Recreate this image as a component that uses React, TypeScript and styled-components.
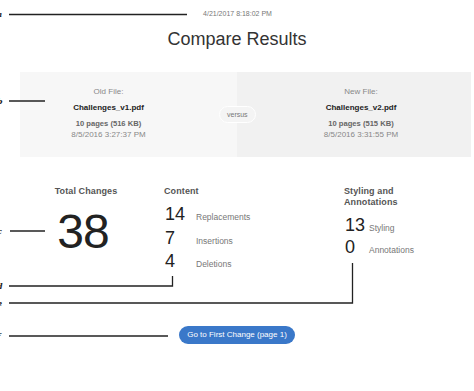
import React from "react";
import styled, { createGlobalStyle } from "styled-components";

const Global = createGlobalStyle`
  html, body { margin: 0; padding: 0; background: #fff; }
  body { font-family: "Liberation Sans", Arial, sans-serif; color: #333; }
`;

const Page = styled.div`
  position: relative;
  width: 474px;
  height: 391px;
  overflow: hidden;
  padding-top: 10px;
  box-sizing: border-box;
`;

const DateLine = styled.div`
  text-align: center;
  font-size: 7px;
  line-height: 8px;
  color: #777;
  padding-left: 1px;
`;

const Title = styled.h1`
  margin: 10px 0 0;
  text-align: center;
  font-size: 18px;
  line-height: 22px;
  font-weight: normal;
  color: #333;
`;

const Files = styled.div`
  position: relative;
  display: flex;
  margin: 22px 3px 0 20px;
  height: 85px;
`;

const FilePanel = styled.div<{ $side: "left" | "right" }>`
  flex: 0 0 ${(p) => (p.$side === "left" ? "217px" : "234px")};
  background: ${(p) => (p.$side === "left" ? "#f7f7f7" : "#f1f1f1")};
  display: flex;
  flex-direction: column;
  align-items: center;
  padding-top: 15px;
  box-sizing: border-box;
  ${(p) => (p.$side === "left" ? "padding-right: 40px;" : "padding-left: 14px;")}
`;

const FileLabel = styled.div`
  font-size: 8px;
  line-height: 10px;
  color: #888;
`;

const FileName = styled.div`
  margin-top: 6px;
  font-size: 8px;
  line-height: 10px;
  font-weight: bold;
  color: #222;
`;

const FilePages = styled.div`
  margin-top: 6px;
  font-size: 7.6px;
  line-height: 10px;
  font-weight: bold;
  color: #666;
`;

const FileDate = styled.div`
  margin-top: 1px;
  font-size: 8px;
  line-height: 10px;
  color: #888;
`;

const Versus = styled.div`
  position: absolute;
  left: 199px;
  top: 34px;
  height: 15px;
  padding: 0 7px;
  border: 1.5px solid #fff;
  border-radius: 9px;
  background: #f4f4f4;
  font-size: 7px;
  line-height: 15px;
  color: #777;
`;

const Stats = styled.div`
  display: grid;
  grid-template-columns: 80px 142px 100px;
  column-gap: 38px;
  margin-top: 29px;
  padding-left: 46px;
  align-items: start;
`;

const StatHeading = styled.div<{ $center?: boolean }>`
  font-size: 9px;
  line-height: 11px;
  font-weight: bold;
  color: #555;
  letter-spacing: 0.1px;
  text-align: ${(p) => (p.$center ? "center" : "left")};
  width: ${(p) => (p.$center ? "auto" : "60px")};
`;

const TotalColumn = styled.div`
  display: flex;
  flex-direction: column;
  align-items: center;
`;

const BigNumber = styled.div`
  margin-top: 11px;
  font-size: 48px;
  line-height: 48px;
  color: #222;
  margin-left: -6px;
  letter-spacing: -1px;
`;

const List = styled.div`
  margin-top: 7px;
`;

const Row = styled.div<{ $gap: number; $h: number }>`
  display: grid;
  grid-template-columns: ${(p) => p.$gap}px auto;
  align-items: baseline;
  height: ${(p) => p.$h}px;
  line-height: ${(p) => p.$h}px;
  overflow: visible;
`;

const Count = styled.span`
  font-size: 18px;
  line-height: 20px;
  color: #222;
  padding-left: 1px;
`;

const CountLabel = styled.span`
  font-size: 8.5px;
  line-height: 10px;
  color: #777;
`;

const ButtonRow = styled.div`
  display: flex;
  justify-content: center;
  margin-top: 51px;
`;

const Button = styled.button`
  height: 18px;
  padding: 0 8px;
  border: none;
  border-radius: 9px;
  background: #3a78c9;
  color: #fff;
  font-family: "Liberation Sans", Arial, sans-serif;
  font-size: 8px;
  line-height: 18px;
  cursor: pointer;
`;

const CalloutLayer = styled.svg`
  position: absolute;
  left: 0;
  top: 0;
  pointer-events: none;
`;

const CalloutLetter = styled.span<{ $top: number }>`
  position: absolute;
  left: -3px;
  top: ${(p) => p.$top}px;
  font-family: "DejaVu Serif", serif;
  font-style: italic;
  font-weight: bold;
  font-size: 8px;
  line-height: 8px;
  color: #222;
`;

const callouts = [
  { letter: "a", d: "M9 14.5 H187" },
  { letter: "b", d: "M9 101 H45" },
  { letter: "c", d: "M10 231 H45" },
  { letter: "d", d: "M9 286 H172.5 V276" },
  { letter: "e", d: "M9 303 H352.5 V263" },
  { letter: "f", d: "M9 336 H168" },
];

const letterY = [10, 97, 227, 282, 299, 332];

type Item = { n: string; label: string };

const content: Item[] = [
  { n: "14", label: "Replacements" },
  { n: "7", label: "Insertions" },
  { n: "4", label: "Deletions" },
];

const styling: Item[] = [
  { n: "13", label: "Styling" },
  { n: "0", label: "Annotations" },
];

export default function App() {
  return (
    <>
      <Global />
      <Page>
        <DateLine>4/21/2017 8:18:02 PM</DateLine>
        <Title>Compare Results</Title>
        <Files>
          <FilePanel $side="left">
            <FileLabel>Old File:</FileLabel>
            <FileName>Challenges_v1.pdf</FileName>
            <FilePages>10 pages (516 KB)</FilePages>
            <FileDate>8/5/2016 3:27:37 PM</FileDate>
          </FilePanel>
          <FilePanel $side="right">
            <FileLabel>New File:</FileLabel>
            <FileName>Challenges_v2.pdf</FileName>
            <FilePages>10 pages (515 KB)</FilePages>
            <FileDate>8/5/2016 3:31:55 PM</FileDate>
          </FilePanel>
          <Versus>versus</Versus>
        </Files>
        <Stats>
          <TotalColumn>
            <StatHeading $center>Total Changes</StatHeading>
            <BigNumber>38</BigNumber>
          </TotalColumn>
          <div>
            <StatHeading>Content</StatHeading>
            <List>
              {content.map((c) => (
                <Row key={c.label} $gap={32} $h={23.5}>
                  <Count>{c.n}</Count>
                  <CountLabel>{c.label}</CountLabel>
                </Row>
              ))}
            </List>
          </div>
          <div>
            <StatHeading>Styling and Annotations</StatHeading>
            <List>
              {styling.map((c) => (
                <Row key={c.label} $gap={25} $h={22}>
                  <Count>{c.n}</Count>
                  <CountLabel>{c.label}</CountLabel>
                </Row>
              ))}
            </List>
          </div>
        </Stats>
        <ButtonRow>
          <Button>Go to First Change (page 1)</Button>
        </ButtonRow>
        <CalloutLayer width="474" height="391" viewBox="0 0 474 391">
          {callouts.map((c) => (
            <path key={c.letter} d={c.d} fill="none" stroke="#222" strokeWidth="1.3" />
          ))}
        </CalloutLayer>
        {callouts.map((c, i) => (
          <CalloutLetter key={c.letter} $top={letterY[i]}>
            {c.letter}
          </CalloutLetter>
        ))}
      </Page>
    </>
  );
}
